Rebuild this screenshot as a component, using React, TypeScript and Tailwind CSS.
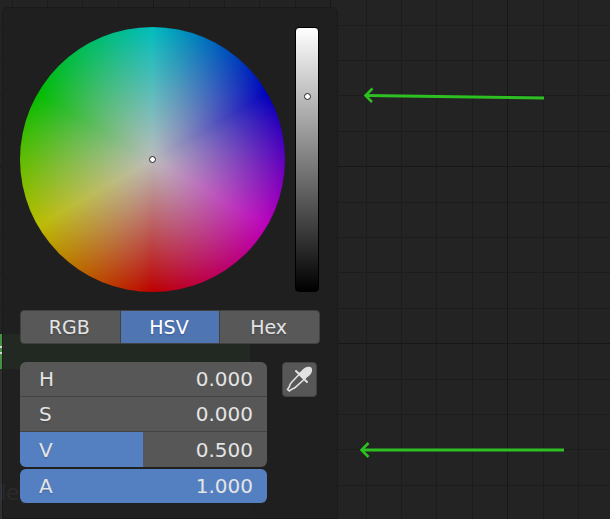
import { useState } from 'react';

const channels = [
  { name: 'H', value: '0.000' },
  { name: 'S', value: '0.000' },
  { name: 'V', value: '0.500' },
];

const modes = ['RGB', 'HSV', 'Hex'];

const minorSteps = [36, 71, 106, 142];

function Grid() {
  return (
    <svg className="absolute inset-0 h-full w-full" aria-hidden="true">
      <defs>
        <pattern id="grid" x="153" y="166" width="177" height="177" patternUnits="userSpaceOnUse">
          {minorSteps.map((step) => (
            <g key={step} fill="#1c1c1c">
              <rect x={step} y="0" width="1" height="177" />
              <rect x="0" y={step} width="177" height="1" />
            </g>
          ))}
          <rect width="1" height="177" fill="#171717" />
          <rect width="177" height="1" fill="#171717" />
        </pattern>
      </defs>
      <rect width="100%" height="100%" fill="url(#grid)" />
    </svg>
  );
}

function Arrows() {
  return (
    <svg className="absolute inset-0 h-full w-full" fill="none" stroke="#2ec022" aria-hidden="true">
      <path d="M366 95.5 L544 98" strokeWidth="3" />
      <path d="M372.5 88.5 L365.5 95.5 L372 102" strokeWidth="2.5" />
      <path d="M362 450 H564" strokeWidth="3" />
      <path d="M368.5 443 L361.5 450 L368.5 457" strokeWidth="2.5" />
    </svg>
  );
}

// Node lying behind the popup, faintly visible through it
function Node() {
  return (
    <div className="absolute top-[334px] left-0 w-[250px] text-[22px] text-[#a8a8a8]" aria-hidden="true">
      <div className="flex h-[35px] items-center bg-[#459245] pb-1">
        <span className="h-2 w-1 border-y-2 border-[#d8d8d8]" />
      </div>
      <div className="h-[185px] bg-[#303030] pt-[112px] leading-6">ley</div>
    </div>
  );
}

function Eyedropper() {
  return (
    <svg viewBox="1 1 33 33" className="h-[33px] w-[33px]" aria-hidden="true">
      <path
        d="M17 12.5 L9 21 C7.5 22.5 8 24 7 25.3 L5.5 27.3 L7.3 29 L9.5 27.3 C11 26.3 12 26.5 13.3 25.3 L22 17.5"
        fill="none"
        stroke="#e2e2e2"
        strokeWidth="1.6"
      />
      <path d="M14 9 L25 20" stroke="#e2e2e2" strokeWidth="2" strokeLinecap="round" />
      <path
        d="M16.5 11 C19 10 20.5 7 23 5.7 C26 4.3 29 4.8 29.8 6.3 C30.5 8.3 30 11 28 13 C26.5 14.5 24.5 15.5 23 17.5 Z"
        fill="#e2e2e2"
      />
    </svg>
  );
}

export default function App() {
  const [mode, setMode] = useState('HSV');
  const [brightness, setBrightness] = useState(0.745);

  return (
    <main className="relative min-h-screen overflow-hidden bg-[#232323] font-['DejaVu_Sans',sans-serif] text-[20px] text-[#e4e4e4]">
      <Grid />
      <Node />
      <Arrows />
      <section
        aria-label="Color picker"
        className="relative mt-[7px] ml-[2px] min-h-[calc(100vh-7px)] w-[336px] rounded-t-md border border-[#1a1a1a] bg-[#1f1f1f]/92 px-[17px] pt-[19px]"
      >
        <div className="flex justify-between">
          <div className="flex h-[265px] w-[265px] items-center justify-center rounded-full bg-[radial-gradient(closest-side,#bcbcbc,#bcbcbc00),conic-gradient(from_180deg,#bc0000,#bcbc00,#00bc00,#00bcbc,#0000bc,#bc00bc,#bc0000)]">
            <span className="h-[7px] w-[7px] rounded-full border border-[#222] bg-white" />
          </div>
          <input
            type="range"
            aria-label="Brightness"
            min="0"
            max="1"
            step="0.005"
            value={brightness}
            onChange={(e) => setBrightness(Number(e.target.value))}
            className="mr-px h-[265px] w-6 appearance-none rounded border border-black bg-[linear-gradient(#fff,#000)] [direction:rtl] [writing-mode:vertical-lr] [&::-webkit-slider-thumb]:h-[7px] [&::-webkit-slider-thumb]:w-[7px] [&::-webkit-slider-thumb]:appearance-none [&::-webkit-slider-thumb]:rounded-full [&::-webkit-slider-thumb]:border [&::-webkit-slider-thumb]:border-[#222] [&::-webkit-slider-thumb]:bg-white"
          />
        </div>

        <div className="mt-[18px] grid h-[34px] grid-cols-3 gap-px overflow-hidden rounded-[4px] border border-[#414141] bg-[#414141] text-[19px]">
          {modes.map((item) => (
            <button
              key={item}
              type="button"
              aria-pressed={mode === item}
              onClick={() => setMode(item)}
              className={`pr-0.5 text-shadow-sm ${mode === item ? 'bg-[#4f76b3] text-white' : 'bg-[#585858]'}`}
            >
              {item}
            </button>
          ))}
        </div>

        <div className="mt-[18px] flex items-start gap-[15px]">
          <div className="flex w-[247px] flex-col gap-0.5">
            <div className="divide-y divide-[#434343] overflow-hidden rounded-md bg-[#575757]">
              {channels.map(({ name, value }) => (
                <label
                  key={name}
                  className={`flex h-[35px] items-center pr-[14px] pl-[19px] text-shadow-sm ${
                    name === 'V' ? 'bg-[linear-gradient(90deg,#5480c2_50%,transparent_50%)]' : ''
                  }`}
                >
                  {name}
                  <input defaultValue={value} className="min-w-0 flex-1 bg-transparent text-right outline-none" />
                </label>
              ))}
            </div>
            <label className="flex h-[34px] items-center rounded-md bg-[#5480c2] pr-[14px] pl-[19px] text-shadow-sm">
              A
              <input defaultValue="1.000" className="min-w-0 flex-1 bg-transparent text-right outline-none" />
            </label>
          </div>
          <button
            type="button"
            aria-label="Eyedropper"
            className="flex h-[35px] w-[35px] items-center justify-center rounded-[4px] border border-[#434343] bg-[#575757]"
          >
            <Eyedropper />
          </button>
        </div>
      </section>
    </main>
  );
}
